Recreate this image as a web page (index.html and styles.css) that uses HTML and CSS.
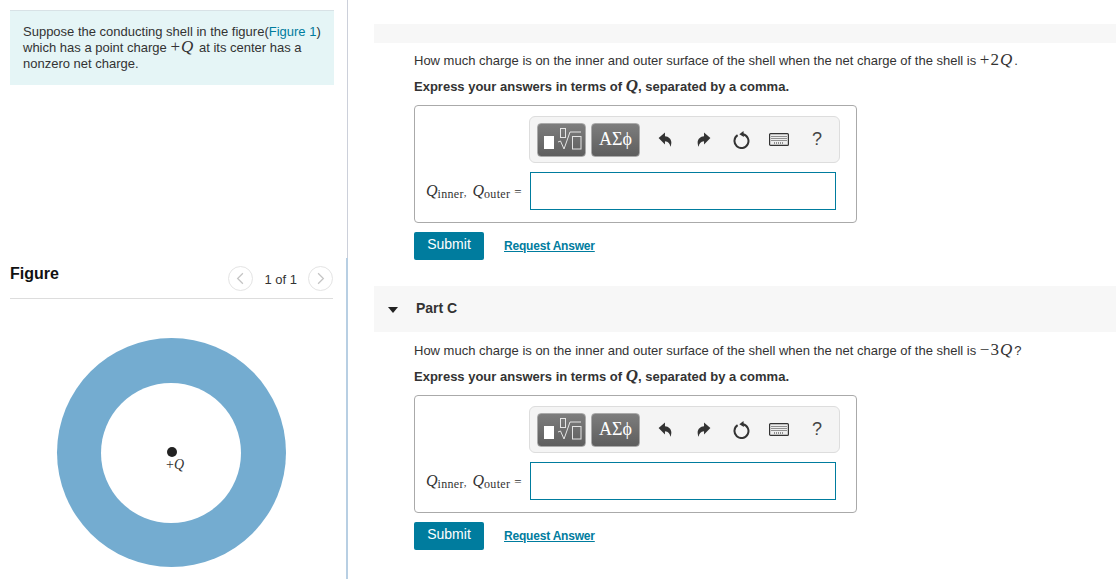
FILE: index.html
```html
<!DOCTYPE html>
<html lang="en">
<head>
    <meta charset="UTF-8">
    <title>Conducting shell</title>
    <link rel="stylesheet" href="styles.css">
</head>
<body>
    <svg class="icon-defs" aria-hidden="true">
        <symbol id="undo" viewBox="0 0 16 16">
            <path d="M1.500 6.500 7.500 1.500v3.400c3.500.2 6 2.700 6 6 0 1.700-.5 3-1 4-.3-3.200-1.800-5-5-5.300v3.100z"/>
        </symbol>
        <symbol id="redo" viewBox="0 0 16 16">
            <path d="M14.500 6.500 8.500 1.500v3.400c-3.500.2-6 2.700-6 6 0 1.700.5 3 1 4 .3-3.200 1.800-5 5-5.300v3.100z"/>
        </symbol>
        <symbol id="reset" viewBox="0 0 18 18">
            <path class="ring" d="M5.600 4.200a7 7 0 1 0 5.400-1"/>
            <path d="M11.500 0 7.300 3.200l4.600 2.800z"/>
        </symbol>
        <symbol id="keyboard" viewBox="0 0 20 13">
            <rect class="key-case" x=".6" y=".6" width="18.800" height="11.800" rx="1"/>
            <path class="keys" d="M2.500 3.500h15M2.500 5.500h15M2.500 7.500h15M5 10h10"/>
        </symbol>
        <symbol id="template" viewBox="0 0 49 34">
            <rect class="tpl-solid" x="7" y="13" width="10" height="13"/>
            <rect class="tpl-line" x="23.500" y="5.500" width="5" height="9"/>
            <path class="tpl-line" d="M21 19l2.500-1 3.500 8 6-17h11"/>
            <rect class="tpl-line" x="35.500" y="13.500" width="8.500" height="12.500"/>
        </symbol>
        <symbol id="chevron-left" viewBox="0 0 24 24">
            <path class="chevron" d="M14.500 6.500 9 12l5.500 5.500"/>
        </symbol>
        <symbol id="chevron-right" viewBox="0 0 24 24">
            <path class="chevron" d="M9.500 6.500 15 12l-5.500 5.500"/>
        </symbol>
    </svg>

    <aside class="left-pane">
        <section class="intro-section">
            <div class="intro">
                Suppose the conducting shell in the figure(<a href="#">Figure 1</a>)
                which has a point charge <span class="math">+<i>Q</i></span> at its center has a
                nonzero net charge.
            </div>
        </section>

        <section class="figure-section">
            <div class="figure-head">
                <h2>Figure</h2>
                <div class="pager">
                    <span class="pager-btn"><svg><use href="#chevron-left"/></svg></span>
                    <span class="pager-text">1 of 1</span>
                    <span class="pager-btn"><svg><use href="#chevron-right"/></svg></span>
                </div>
            </div>
            <div class="shell">
                <div class="shell-hole">
                    <span class="charge-dot"></span>
                    <span class="charge-label">+<i>Q</i></span>
                </div>
            </div>
        </section>
    </aside>

    <main class="right-pane">
        <div class="part-stub"></div>
        <div class="part-body part-body-first">
            <p class="question">How much charge is on the inner and outer surface of the shell when the net charge of the shell is <span class="math">+2<i>Q</i></span>.</p>
            <p class="instruction">Express your answers in terms of <span class="math"><i>Q</i></span>, separated by a comma.</p>
            <div class="answer-box">
                <div class="toolbar">
                    <span class="palette-btn"><svg class="icon-template"><use href="#template"/></svg></span>
                    <span class="palette-btn palette-greek">&Alpha;&Sigma;&#981;</span>
                    <span class="tool"><svg class="icon-arrow"><use href="#undo"/></svg></span>
                    <span class="tool"><svg class="icon-arrow"><use href="#redo"/></svg></span>
                    <span class="tool"><svg class="icon-reset"><use href="#reset"/></svg></span>
                    <span class="tool"><svg class="icon-keyboard"><use href="#keyboard"/></svg></span>
                    <span class="tool tool-help">?</span>
                </div>
                <div class="answer-row">
                    <span class="answer-label"><i>Q</i><sub>inner</sub><span class="label-comma">,</span><i>Q</i><sub>outer</sub><span class="label-eq">=</span></span>
                    <input class="answer-input" type="text">
                </div>
            </div>
            <div class="actions">
                <button class="submit-btn">Submit</button>
                <a class="request-link" href="#">Request Answer</a>
            </div>
        </div>

        <div class="part-head">
            <span class="caret"></span>
            <h3>Part C</h3>
        </div>
        <div class="part-body">
            <p class="question">How much charge is on the inner and outer surface of the shell when the net charge of the shell is <span class="math">&minus;3<i>Q</i></span>?</p>
            <p class="instruction">Express your answers in terms of <span class="math"><i>Q</i></span>, separated by a comma.</p>
            <div class="answer-box">
                <div class="toolbar">
                    <span class="palette-btn"><svg class="icon-template"><use href="#template"/></svg></span>
                    <span class="palette-btn palette-greek">&Alpha;&Sigma;&#981;</span>
                    <span class="tool"><svg class="icon-arrow"><use href="#undo"/></svg></span>
                    <span class="tool"><svg class="icon-arrow"><use href="#redo"/></svg></span>
                    <span class="tool"><svg class="icon-reset"><use href="#reset"/></svg></span>
                    <span class="tool"><svg class="icon-keyboard"><use href="#keyboard"/></svg></span>
                    <span class="tool tool-help">?</span>
                </div>
                <div class="answer-row">
                    <span class="answer-label"><i>Q</i><sub>inner</sub><span class="label-comma">,</span><i>Q</i><sub>outer</sub><span class="label-eq">=</span></span>
                    <input class="answer-input" type="text">
                </div>
            </div>
            <div class="actions">
                <button class="submit-btn">Submit</button>
                <a class="request-link" href="#">Request Answer</a>
            </div>
        </div>
    </main>
</body>
</html>
```

FILE: styles.css
```css
html, body {
    height: 100%;
}

body {
    font-family: 'Liberation Sans', Arial, sans-serif;
    font-size: 13px;
    margin: 0;
    background-color: #fff;
    color: #333;
    display: flex;
    overflow: hidden;
}

a {
    color: #007c9e;
    text-decoration: none;
}

.icon-defs {
    position: absolute;
    width: 0;
    height: 0;
}

.math {
    font-family: 'Liberation Serif', serif;
    font-size: 17px;
    line-height: 14px;
    letter-spacing: 1px;
    margin-right: 1px;
}

/* left pane */
.left-pane {
    width: 348px;
    flex: none;
    display: flex;
    flex-direction: column;
}

.intro-section {
    height: 258px;
    box-sizing: border-box;
    padding: 10px 13px 0 10px;
    border-right: 1px solid #ccd0da;
}

.intro {
    background-color: #e5f5f6;
    border-top: 1px solid #d8e2e6;
    height: 61px;
    padding: 13px 10px 0 13px;
    line-height: 16px;
}

.figure-section {
    flex: 1;
    padding: 0 13px 0 10px;
    border-right: 2px solid #b8cfe3;
}

.figure-head {
    display: flex;
    justify-content: space-between;
    align-items: center;
    height: 40px;
    border-bottom: 1px solid #ddd;
}

.figure-head h2 {
    margin: 0 0 8px;
    font-size: 16px;
    color: #111;
}

.pager {
    display: flex;
    align-items: center;
    gap: 11px;
}

.pager-btn {
    width: 25px;
    height: 25px;
    box-sizing: border-box;
    border: 1px solid #e4e4e4;
    border-radius: 50%;
}

.pager-btn svg {
    display: block;
    width: 23px;
    height: 23px;
}

.chevron {
    fill: none;
    stroke: #c4c4c4;
    stroke-width: 1.300;
}

.pager-text {
    font-size: 13px;
    margin-top: 2px;
}

.shell {
    width: 229px;
    height: 229px;
    margin: 39px 0 0 47px;
    border-radius: 50%;
    background-color: #74acd0;
    display: flex;
    align-items: center;
    justify-content: center;
}

.shell-hole {
    width: 140px;
    height: 140px;
    margin-right: 1px;
    border-radius: 50%;
    background-color: #fff;
    display: flex;
    flex-direction: column;
    align-items: center;
    justify-content: center;
}

.charge-dot {
    width: 10px;
    height: 10px;
    margin: 14px 0 0 2px;
    border-radius: 50%;
    background-color: #222;
}

.charge-label {
    font-family: 'Liberation Serif', serif;
    font-size: 14px;
    line-height: 14px;
    margin: 1px 0 0 8px;
}

/* right pane */
.right-pane {
    flex: 1;
    min-width: 0;
    padding-left: 26px;
}

.part-stub {
    height: 19px;
    margin-top: 24px;
    background-color: #f7f7f7;
}

.part-head {
    height: 46px;
    box-sizing: border-box;
    padding-bottom: 2px;
    display: flex;
    align-items: center;
    background-color: #f7f7f7;
    margin-top: 26px;
}

.part-head h3 {
    margin: 0;
    font-size: 14px;
    color: #333;
}

.caret {
    width: 0;
    height: 0;
    border-left: 5px solid transparent;
    border-right: 5px solid transparent;
    border-top: 6px solid #222;
    margin: 4px 18px 0 14px;
}

.part-body {
    padding: 11px 0 0 40px;
}

.part-body-first {
    padding-top: 10px;
}

.question,
.instruction {
    margin: 0;
    height: 16px;
    line-height: 16px;
}

.instruction {
    margin-top: 10px;
    font-weight: bold;
}

.instruction .math {
    letter-spacing: 0;
    margin-right: 0;
}

.answer-box {
    width: 443px;
    height: 118px;
    box-sizing: border-box;
    margin-top: 10px;
    padding-top: 10px;
    border: 1px solid #aaa;
    border-radius: 4px;
}

.toolbar {
    width: 311px;
    height: 47px;
    box-sizing: border-box;
    margin-left: 114px;
    padding-left: 7px;
    display: flex;
    align-items: center;
    background-color: #f4f4f4;
    border: 1px solid #ddd;
    border-radius: 6px;
}

.palette-btn {
    width: 49px;
    height: 34px;
    box-sizing: border-box;
    margin-right: 5px;
    border: 1px solid #aaa;
    border-radius: 4px;
    background: linear-gradient(#7d7d7d, #5e5e5e);
    color: #fff;
}

.palette-greek {
    margin-right: 0;
    font-family: 'Liberation Serif', serif;
    font-size: 18px;
    line-height: 30px;
    text-align: center;
}

.icon-template {
    display: block;
    width: 49px;
    height: 34px;
    margin: -1px;
}

.tpl-solid {
    fill: #fff;
}

.tpl-line {
    fill: none;
    stroke: #e4e4e4;
    stroke-width: 1;
}

.tool {
    width: 38px;
    height: 24px;
    display: flex;
    align-items: center;
    justify-content: center;
    color: #333;
}

.palette-greek + .tool {
    margin-left: 6px;
}

.tool-help {
    font-size: 18px;
    color: #444;
}

.icon-arrow {
    width: 17px;
    height: 17px;
    fill: #333;
}

.icon-reset {
    width: 18px;
    height: 18px;
    fill: #333;
}

.ring {
    fill: none;
    stroke: #333;
    stroke-width: 2;
}

.icon-keyboard {
    width: 20px;
    height: 13px;
}

.key-case {
    fill: #eee;
    stroke: #333;
    stroke-width: 1.200;
}

.keys {
    fill: none;
    stroke: #333;
    stroke-width: 1;
    stroke-dasharray: 1 1;
}

.answer-row {
    display: flex;
    align-items: center;
    margin-top: 9px;
    padding-left: 11px;
}

.answer-label {
    width: 104px;
    flex: none;
    font-family: 'Liberation Serif', serif;
    font-size: 11px;
    white-space: nowrap;
}

.answer-label i {
    font-size: 16px;
}

.answer-label sub {
    font-size: 12px;
    letter-spacing: .3px;
    line-height: 0;
    vertical-align: -2px;
}

.label-comma {
    margin-right: 6px;
}

.label-eq {
    margin-left: 4px;
    font-size: 13px;
}

.answer-input {
    width: 306px;
    height: 38px;
    box-sizing: border-box;
    border: 1px solid #007c9e;
    padding: 0 5px;
    background-color: #fff;
}

.actions {
    display: flex;
    align-items: center;
    margin-top: 9px;
}

.submit-btn {
    width: 70px;
    height: 28px;
    background-color: #007c9e;
    color: #fff;
    border: none;
    border-radius: 2px;
    font-family: 'Liberation Sans', Arial, sans-serif;
    font-size: 14px;
    padding: 0 0 5px;
}

.request-link {
    margin-left: 20px;
    font-size: 12px;
    font-weight: bold;
    letter-spacing: -.2px;
    text-decoration: underline;
}
```
